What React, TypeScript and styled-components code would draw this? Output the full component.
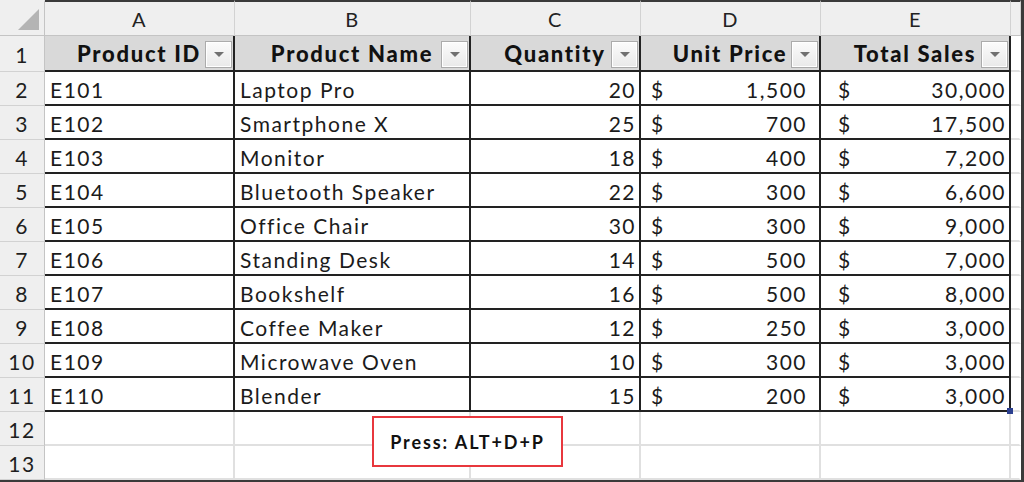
import styled, { createGlobalStyle } from "styled-components";

const GlobalStyle = createGlobalStyle`
  html, body {
    margin: 0;
    padding: 0;
    background: #ffffff;
  }
`;

type Sale = {
  id: string;
  name: string;
  qty: number;
  price: string;
  total: string;
};

const sales: Sale[] = [
  { id: "E101", name: "Laptop Pro", qty: 20, price: "1,500", total: "30,000" },
  { id: "E102", name: "Smartphone X", qty: 25, price: "700", total: "17,500" },
  { id: "E103", name: "Monitor", qty: 18, price: "400", total: "7,200" },
  { id: "E104", name: "Bluetooth Speaker", qty: 22, price: "300", total: "6,600" },
  { id: "E105", name: "Office Chair", qty: 30, price: "300", total: "9,000" },
  { id: "E106", name: "Standing Desk", qty: 14, price: "500", total: "7,000" },
  { id: "E107", name: "Bookshelf", qty: 16, price: "500", total: "8,000" },
  { id: "E108", name: "Coffee Maker", qty: 12, price: "250", total: "3,000" },
  { id: "E109", name: "Microwave Oven", qty: 10, price: "300", total: "3,000" },
  { id: "E110", name: "Blender", qty: 15, price: "200", total: "3,000" },
];

const headers = ["Product ID", "Product Name", "Quantity", "Unit Price", "Total Sales"];
const letters = ["A", "B", "C", "D", "E"];

const Frame = styled.div`
  position: relative;
  width: 1024px;
  height: 482px;
  box-sizing: border-box;
  border-right: 3px solid #3a3a3a;
  border-bottom: 2px solid #3a3a3a;
  font-family: Lato, "Liberation Sans", sans-serif;
  letter-spacing: 1.5px;
  color: #1b1b1b;
  overflow: hidden;
`;

const Sheet = styled.div`
  display: grid;
  grid-template-columns: 45px 190px 236px 170px 180px 190px 10px;
  grid-template-rows: 36px 36px repeat(12, 34px);
`;

const Corner = styled.div`
  position: relative;
  background: #efefef;
  box-sizing: border-box;
  border-right: 1px solid #c4c4c4;
  border-bottom: 1px solid #c4c4c4;
  border-top: 2px solid #efefef;

  &::after {
    content: "";
    position: absolute;
    right: 5px;
    bottom: 5px;
    border-style: solid;
    border-width: 0 0 21px 21px;
    border-color: transparent transparent #b4b4b4 transparent;
  }
`;

const ColHead = styled.div`
  display: flex;
  align-items: center;
  justify-content: center;
  background: #efefef;
  box-sizing: border-box;
  border-top: 2px solid #3a3a3a;
  border-right: 1px solid #d2d2d2;
  border-bottom: 1px solid #c4c4c4;
  font-size: 20px;
  color: #222;
`;

const RowHead = styled.div`
  display: flex;
  align-items: center;
  justify-content: center;
  background: #efefef;
  box-sizing: border-box;
  padding-top: 2px;
  border-right: 1px solid #c4c4c4;
  border-bottom: 1px solid #d2d2d2;
  font-size: 21px;
  color: #1e1e1e;
`;

const Cell = styled.div<{ $align?: "left" | "right"; $padL?: number; $padR?: number }>`
  display: flex;
  align-items: center;
  justify-content: ${(p) => (p.$align === "right" ? "flex-end" : "flex-start")};
  box-sizing: border-box;
  padding: 2px ${(p) => p.$padR ?? 4}px 0 ${(p) => p.$padL ?? 4}px;
  border-right: 2px solid #222;
  border-bottom: 2px solid #222;
  font-size: 21px;
  white-space: nowrap;
`;

const Money = styled(Cell)`
  justify-content: space-between;
`;

const TitleCell = styled(Cell)`
  position: relative;
  justify-content: center;
  background: #d9d9d9;
  font-weight: 900;
  font-size: 22px;
  letter-spacing: 1.7px;
  color: #111;
  padding: 1px 0 0;
`;

const FilterButton = styled.span`
  position: absolute;
  right: 1px;
  top: 5px;
  width: 27px;
  height: 27px;
  box-sizing: border-box;
  border: 1px solid #ababab;
  box-shadow: inset 0 0 0 1px #ffffff;
  background: linear-gradient(#fbfbfb, #e9e9e9);
  display: flex;
  align-items: center;
  justify-content: center;

  &::after {
    content: "";
    border-style: solid;
    border-width: 5px 5px 0 5px;
    border-color: #707070 transparent transparent transparent;
  }
`;

const Blank = styled.div<{ $edge?: boolean }>`
  box-sizing: border-box;
  border-right: 2px solid ${(p) => (p.$edge ? "transparent" : "#e0e0e0")};
  border-bottom: 2px solid #e0e0e0;
`;

const FillHandle = styled.span`
  position: absolute;
  right: -4px;
  bottom: -4px;
  width: 6px;
  height: 6px;
  background: #2b3f8f;
`;

const LastCell = styled(Money)`
  position: relative;
`;

const Callout = styled.div`
  position: absolute;
  left: 372px;
  top: 416px;
  width: 191px;
  height: 51px;
  box-sizing: border-box;
  border: 2px solid #e8373d;
  background: #ffffff;
  display: flex;
  align-items: center;
  justify-content: center;
  font-family: Lato, "Liberation Sans", sans-serif;
  font-weight: 700;
  font-size: 18px;
  letter-spacing: 1.9px;
  color: #111;
`;

export default function App() {
  return (
    <>
      <GlobalStyle />
      <Frame>
        <Sheet>
          <Corner />
          {letters.map((l) => (
            <ColHead key={l}>{l}</ColHead>
          ))}
          <ColHead />

          <RowHead>1</RowHead>
          {headers.map((h) => (
            <TitleCell key={h}>
              {h}
              <FilterButton />
            </TitleCell>
          ))}
          <Blank $edge />

          {sales.map((s, i) => {
            const last = i === sales.length - 1;
            const TotalCell = last ? LastCell : Money;
            return [
              <RowHead key={`r${i}`}>{i + 2}</RowHead>,
              <Cell key={`a${i}`} $padL={5}>{s.id}</Cell>,
              <Cell key={`b${i}`} $padL={5}>{s.name}</Cell>,
              <Cell key={`c${i}`} $align="right" $padR={3}>{s.qty}</Cell>,
              <Money key={`d${i}`} $padL={10} $padR={12}>
                <span>$</span>
                <span>{s.price}</span>
              </Money>,
              <TotalCell key={`e${i}`} $padL={17} $padR={3}>
                <span>$</span>
                <span>{s.total}</span>
                {last && <FillHandle />}
              </TotalCell>,
              <Blank key={`x${i}`} $edge />,
            ];
          })}

          {[12, 13].map((n) => [
            <RowHead key={`r${n}`}>{n}</RowHead>,
            ...letters.map((l) => <Blank key={`${l}${n}`} />),
            <Blank key={`x${n}`} $edge />,
          ])}
        </Sheet>
        <Callout>Press: ALT+D+P</Callout>
      </Frame>
    </>
  );
}
